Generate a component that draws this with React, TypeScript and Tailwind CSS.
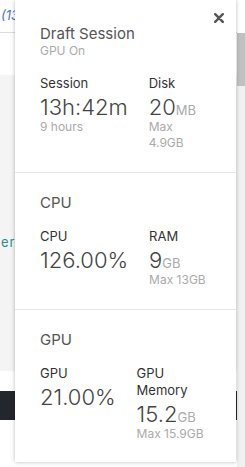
import React from "react";

type Stat = {
  label: string;
  value: string;
  unit?: string;
  note?: string;
  narrow?: boolean;
};

type Section = {
  title: string;
  subtitle?: string;
  stats: Stat[];
};

const sections: Section[] = [
  {
    title: "Draft Session",
    subtitle: "GPU On",
    stats: [
      { label: "Session", value: "13h:42m", note: "9 hours" },
      { label: "Disk", value: "20", unit: "MB", note: "Max 4.9GB", narrow: true },
    ],
  },
  {
    title: "CPU",
    stats: [
      { label: "CPU", value: "126.00%" },
      { label: "RAM", value: "9", unit: "GB", note: "Max 13GB" },
    ],
  },
  {
    title: "GPU",
    stats: [
      { label: "GPU", value: "21.00%" },
      { label: "GPU Memory", value: "15.2", unit: "GB", note: "Max 15.9GB", narrow: true },
    ],
  },
];

const StatBlock = ({ stat }: { stat: Stat }) => (
  <div className="shrink-0">
    <div className={`text-[13px] leading-[17px] text-[#333] ${stat.narrow ? "max-w-[62px]" : ""}`}>
      {stat.label}
    </div>
    <div className="mt-[3px] text-[22px] leading-[24px] font-light text-[#444] whitespace-nowrap">
      {stat.value}
      {stat.unit && (
        <span className="text-[13px] leading-[16px] text-[#aaa] font-normal">{stat.unit}</span>
      )}
    </div>
    {stat.note && (
      <div
        className={`text-[12px] leading-[16px] text-[#aaa] ${
          stat.narrow && stat.label === "Disk" ? "max-w-[45px]" : ""
        }`}
      >
        {stat.note}
      </div>
    )}
  </div>
);

export default function App() {
  return (
    <div
      className="relative w-[245px] h-[467px] overflow-hidden bg-white"
      style={{ fontFamily: "Inter, 'Noto Sans', sans-serif" }}
    >
      {/* page behind the popover */}
      <div className="flex h-full">
        <div className="flex-1 flex flex-col">
          <div className="h-[33px] border-b border-[#dcdcdc] flex items-center text-[13px] italic text-[#4a74c9] pl-[1px]">
            (13
          </div>
          <div className="h-[42px]" />
          <div className="h-[296px] bg-[#f4f4f4] pt-[158px] pl-[1px] text-[13px] tracking-[1px] text-[#2f8a91]">
            er
          </div>
          <div className="h-[20px]" />
          <div className="h-[29px] bg-[#23262d]" />
          <div className="flex-1" />
        </div>
        <div className="w-[8px] flex flex-col">
          <div className="h-[33px] bg-white" />
          <div className="h-[53px] bg-[#c1c1c1]" />
          <div className="flex-1 bg-[#f1f1f1]" />
        </div>
      </div>

      {/* session popover */}
      <div className="absolute left-[15px] top-0 w-[221px] h-[462px] bg-white shadow-[0_0_4px_rgba(0,0,0,0.28)]">
        <button className="absolute right-[12px] top-[13px] w-[10px] h-[10px] text-[#555]">
          <svg viewBox="0 0 10 10" width="10" height="10">
            <path
              d="M1.2 1.2 L8.8 8.8 M8.8 1.2 L1.2 8.8"
              stroke="currentColor"
              strokeWidth="2.4"
              strokeLinecap="round"
            />
          </svg>
        </button>

        {sections.map((section, i) => (
          <div
            key={section.title}
            className={`pl-[25px] pr-[20px] ${
              i === 0
                ? "pt-[25px] h-[172px]"
                : i === 1
                ? "pt-[21px] h-[137px] border-t border-[#e6e6e6]"
                : "pt-[21px] border-t border-[#e6e6e6]"
            }`}
          >
            <div className="text-[15px] leading-[18px] text-[#555]">{section.title}</div>
            {section.subtitle && (
              <div className="text-[12px] leading-[16px] text-[#aaa]">{section.subtitle}</div>
            )}
            <div className="mt-4 flex gap-[21px]">
              {section.stats.map((stat) => (
                <StatBlock key={stat.label} stat={stat} />
              ))}
            </div>
          </div>
        ))}
      </div>
    </div>
  );
}
